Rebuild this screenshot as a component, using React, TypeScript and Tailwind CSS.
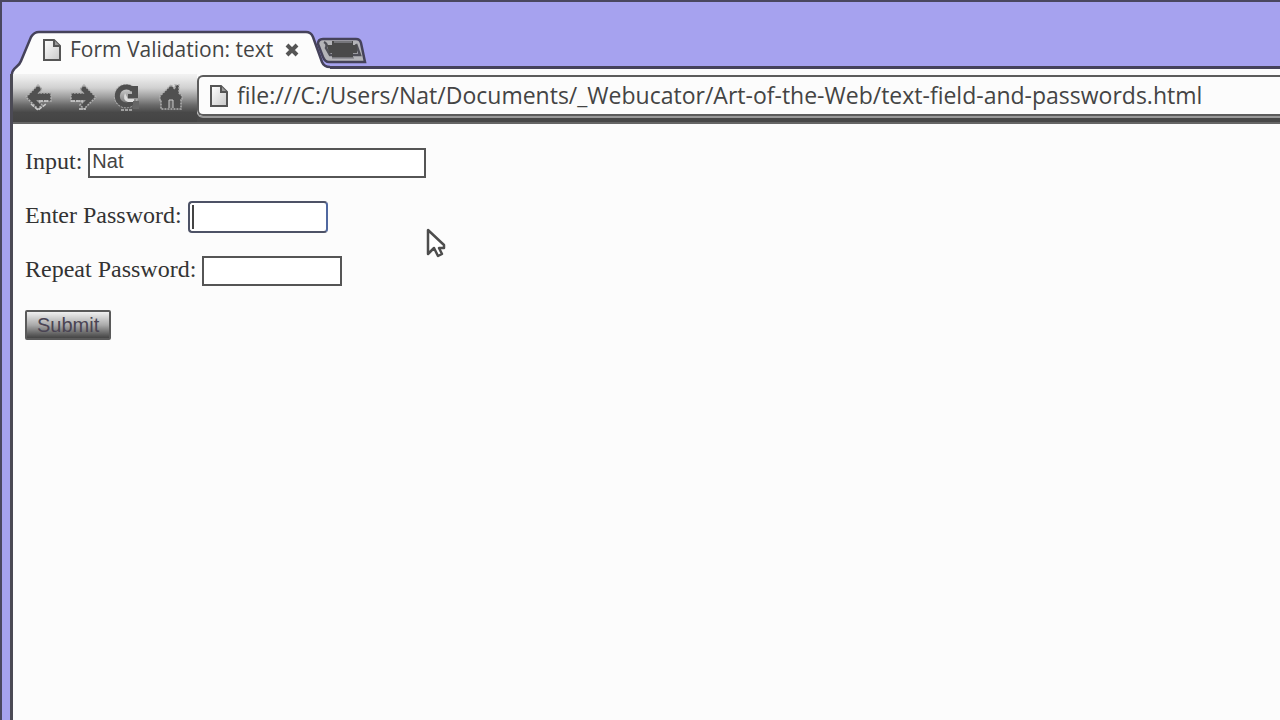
import React, { useState } from 'react';

function PageIcon() {
  return (
    <svg width="20" height="24" viewBox="0 0 20 24" className="shrink-0" aria-hidden="true">
      <defs>
        <linearGradient id="sheet" x1="0" y1="0" x2="1" y2="1">
          <stop offset="0" stopColor="#fff" />
          <stop offset="1" stopColor="#c8c8c8" />
        </linearGradient>
      </defs>
      <path d="M2 2H12L18 8V22H2Z" fill="url(#sheet)" stroke="#555" strokeWidth="2" />
      <path d="M12 2V8H18" fill="#999" stroke="#555" strokeWidth="2" />
    </svg>
  );
}

function BackIcon() {
  return (
    <svg width="28" height="28" viewBox="0 0 28 28" aria-hidden="true">
      <path
        d="M13 1L1 13L13 25L17 21L13 17H26V9H14L17 5Z"
        fill="#505050"
        stroke="#b0b0b0"
        strokeWidth="1.5"
        strokeDasharray="2 1"
      />
      <path d="M14 17H24M6 20L13 26L21 20" fill="none" stroke="#ccc" strokeWidth="1.5" strokeDasharray="4 1" />
    </svg>
  );
}

function ForwardIcon() {
  return (
    <svg width="28" height="28" viewBox="0 0 28 28" aria-hidden="true">
      <path
        d="M15 1L27 13L15 25L11 21L15 17H2V9H14L11 5Z"
        fill="#505050"
        stroke="#b0b0b0"
        strokeWidth="1.5"
        strokeDasharray="2 1"
      />
      <path d="M2 17H14M10 25H17" stroke="#ccc" strokeWidth="1.5" strokeDasharray="4 1" />
    </svg>
  );
}

function ReloadIcon() {
  return (
    <svg width="28" height="28" viewBox="0 0 28 28" aria-hidden="true">
      <circle
        cx="13"
        cy="12"
        r="11.5"
        fill="none"
        stroke="#b0b0b0"
        strokeWidth="1.5"
        strokeDasharray="2 1"
      />
      <path d="M20 18A9 9 0 1 1 20 6" fill="none" stroke="#505050" strokeWidth="5" />
      <path d="M25 2V14H15V10H19V2Z" fill="#505050" />
      <path d="M12 9Q9 16 15 18H21V15H15Z" fill="#ddd" />
      <path d="M20 17H26V25H20Z" fill="#666" />
      <path d="M8 26H20" stroke="#bbb" strokeWidth="1.5" strokeDasharray="3 1" />
    </svg>
  );
}

function HomeIcon() {
  return (
    <svg width="28" height="28" viewBox="0 0 28 28" aria-hidden="true">
      <path
        d="M14 1L3 12V16H4V25H24V16H25V12L22 9V1H18V5Z"
        fill="#505050"
        stroke="#b0b0b0"
        strokeWidth="1.5"
        strokeDasharray="2 1"
      />
      <path d="M12 24V16H16V24" fill="#666" stroke="#ccc" strokeWidth="1" />
    </svg>
  );
}

function TabShape() {
  return (
    <svg
      width="320"
      height="44"
      viewBox="0 0 320 44"
      className="absolute top-0 left-0"
      aria-hidden="true"
    >
      <path d="M0 44V30H16L10 40L3 44Z" fill="#a6a2ef" />
      <path
        d="M2 44C2 38 9 37 11 31L21 7Q24 2 29 2H296Q301 2 303 7L312 32Q314 37 320 37V44Z"
        fill="#fcfcfc"
      />
      <path
        d="M2 44C2 38 9 37 11 31L21 7Q24 2 29 2H296Q301 2 303 7L312 32Q314 37 320 37"
        fill="none"
        stroke="#45425a"
        strokeWidth="2.5"
      />
    </svg>
  );
}

function NewTabIcon() {
  return (
    <svg width="52" height="28" viewBox="0 0 52 28" aria-hidden="true">
      <path
        d="M7 3H40Q44 3 45 7L49 26H13Q9 26 7 21L2 8Q2 3 7 3Z"
        fill="#b4b4b8"
        stroke="#45425a"
        strokeWidth="2.5"
      />
      <path
        d="M8 6Q12 8 10 12L14 19H44L40 8"
        fill="none"
        stroke="#505058"
        strokeWidth="2.5"
      />
      <path d="M16 5H37V22H16Z" fill="#4a4a4a" />
      <path d="M11 9H41V17H13Z" fill="#4a4a4a" />
      <path d="M18 6H36M16 22H38" stroke="#85858c" strokeWidth="1.5" />
    </svg>
  );
}

function Cursor() {
  return (
    <svg
      width="22"
      height="32"
      viewBox="0 0 22 32"
      className="pointer-events-none absolute top-[104px] left-[413px]"
      aria-hidden="true"
    >
      <path
        d="M2 2V26L8 20L12 28L16 26L13 20H18V17Z"
        fill="#fff"
        stroke="#4d4d4d"
        strokeWidth="2.5"
        strokeLinejoin="round"
      />
    </svg>
  );
}

const navButtons = [
  { label: 'Back', icon: BackIcon },
  { label: 'Forward', icon: ForwardIcon },
  { label: 'Reload', icon: ReloadIcon },
  { label: 'Home', icon: HomeIcon },
];

const url =
  'file:///C:/Users/Nat/Documents/_Webucator/Art-of-the-Web/text-field-and-passwords.html';

export default function App() {
  const [address, setAddress] = useState(url);
  const [name, setName] = useState('Nat');

  return (
    <div className="flex min-h-screen flex-col overflow-hidden border-t-2 border-l-2 border-[#4a475f] bg-[#a6a2ef] pl-2">
      <div className="flex items-start pt-7">
        <div className="relative z-10 -mb-3 flex h-12 w-80 shrink-0 items-center pl-8">
          <TabShape />
          <div className="relative -mt-2 flex items-center gap-2 font-['Open_Sans',sans-serif] text-[21px] text-[#444]">
            <PageIcon />
            <span className="whitespace-nowrap">Form Validation: text</span>
            <button type="button" aria-label="Close tab" className="pl-1">
              <svg width="14" height="14" viewBox="0 0 14 14" aria-hidden="true">
                <path d="M2 2L12 12M12 2L2 12" stroke="#555" strokeWidth="4" />
              </svg>
            </button>
          </div>
        </div>
        <button type="button" aria-label="New tab" className="z-10 -ml-3.5 pt-1.5">
          <NewTabIcon />
        </button>
      </div>

      <div className="flex flex-1 flex-col border-l-3 border-[#4b4a55] bg-[#fcfcfc]">
        <div className="flex h-[58px] border-t-3 border-b-2 border-t-[#45425a] border-b-[#666] bg-[linear-gradient(#fcfcfc_0%,#ececec_16%,#d0d0d0_36%,#9a9a9a_54%,#6a6a6a_68%,#484848_82%,#444_100%)]">
          <nav className="flex items-center gap-4 px-3 pt-1">
            {navButtons.map(({ label, icon: Icon }) => (
              <button key={label} type="button" aria-label={label}>
                <Icon />
              </button>
            ))}
          </nav>
          <div className="flex flex-1 flex-col">
            <div className="flex flex-1 rounded-l-md border-b-2 border-[#999] bg-[#fcfcfc] pt-1.5">
              <div className="flex flex-1 items-center gap-2 rounded-l-md border-2 border-r-0 border-[#5c5c5c] bg-[#fcfcfc] pl-2.5">
                <PageIcon />
                <input
                  aria-label="Address"
                  value={address}
                  onChange={(e) => setAddress(e.target.value)}
                  className="h-8 min-w-0 flex-1 font-['Open_Sans',sans-serif] text-[23px] text-[#444] outline-none"
                />
              </div>
            </div>
            <div className="h-1 bg-[#484848]" />
          </div>
        </div>

        <form
          className="relative flex flex-col items-start gap-6 px-3 py-6 font-['Liberation_Serif',serif] text-2xl text-[#333]"
          onSubmit={(e) => e.preventDefault()}
        >
          <div className="flex h-[30px] items-center gap-1.5">
            <label htmlFor="name" className="pb-1">
              Input:
            </label>
            <input
              id="name"
              type="text"
              value={name}
              onChange={(e) => setName(e.target.value)}
              className="h-[30px] w-[338px] border-2 border-[#555] bg-white px-0.5 pb-1 font-['Liberation_Sans',sans-serif] text-xl text-[#444] outline-none"
            />
          </div>
          <div className="flex h-[30px] items-center gap-1.5">
            <label htmlFor="password" className="pb-1">
              Enter Password:
            </label>
            <div className="flex h-8 w-[140px] items-center rounded-sm border-2 border-[#4d5266] border-r-[#5068a0] bg-white pl-0.5">
              <span className="h-6 w-0.5 bg-[#444]" />
              <input
                id="password"
                type="password"
                className="h-full min-w-0 flex-1 text-xl outline-none"
              />
            </div>
          </div>
          <div className="flex h-[30px] items-center gap-1.5">
            <label htmlFor="repeat" className="pb-1">
              Repeat Password:
            </label>
            <input
              id="repeat"
              type="password"
              className="h-[30px] w-[140px] border-2 border-[#555] bg-white px-0.5 text-xl outline-none"
            />
          </div>
          <button
            type="submit"
            className="h-[30px] rounded-xs border-2 border-[#5a5a5a] bg-linear-to-b from-[#f0f0f0] via-[#aaa] to-[#444] px-2.5 font-['Liberation_Sans',sans-serif] text-xl leading-6 text-[#4a4453]"
          >
            Submit
          </button>
          <Cursor />
        </form>
      </div>
    </div>
  );
}
